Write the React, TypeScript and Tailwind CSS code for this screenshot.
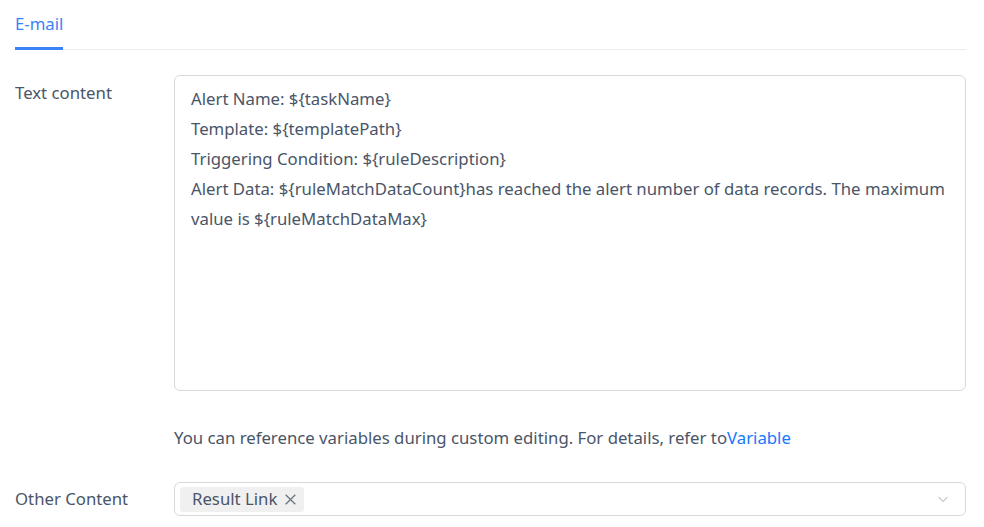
import React from "react";

export default function App() {
  const lines = [
    "Alert Name: ${taskName}",
    "Template: ${templatePath}",
    "Triggering Condition: ${ruleDescription}",
    "Alert Data: ${ruleMatchDataCount}has reached the alert number of data records. The maximum",
    "value is ${ruleMatchDataMax}",
  ];
  return (
    <div
      className="w-[984px] h-[527px] bg-white text-[16.75px] text-[#4a5568] overflow-hidden"
      style={{ fontFamily: '"Noto Sans", "Open Sans", sans-serif' }}
    >
      <div className="pl-[15px] pr-[18px]">
        <div className="flex border-b border-[#ebedf0] h-[50px]">
          <div className="relative flex items-center h-full text-[#3b82f6] pb-[2px]">
            E-mail
            <div className="absolute left-0 right-0 bottom-[-1px] h-[3px] bg-[#3b82f6]" />
          </div>
        </div>

        <div className="flex mt-[25px]">
          <div className="w-[159px] shrink-0 pt-[5px]">Text content</div>
          <div className="flex-1">
            <div className="h-[316px] border border-[#d9d9d9] rounded-[6px] px-[16px] pt-[8px] leading-[30px]">
              {lines.map((l, i) => (
                <div key={i} className="whitespace-nowrap">
                  {l}
                </div>
              ))}
            </div>
            <div className="mt-[35px] leading-[24px]">
              You can reference variables during custom editing. For details, refer to
              <span className="text-[#1677ff]">Variable</span>
            </div>
          </div>
        </div>

        <div className="flex items-center mt-[32px]">
          <div className="w-[159px] shrink-0">Other Content</div>
          <div className="flex-1 h-[34px] border border-[#d9d9d9] rounded-[6px] flex items-center pl-[5px] pr-[16px]">
            <div className="flex items-center h-[25px] bg-[#f0f0f0] rounded-[3px] pl-[12px] pr-[6px] gap-[6px]">
              <span>Result Link</span>
              <svg width="15" height="15" viewBox="0 0 14 14" className="text-[#6b7280]">
                <path d="M2.5 2.5 L11.5 11.5 M11.5 2.5 L2.5 11.5" stroke="currentColor" strokeWidth="1.2" fill="none" />
              </svg>
            </div>
            <div className="flex-1" />
            <svg width="12" height="12" viewBox="0 0 12 12" className="text-[#c4c8cf]">
              <path d="M1.5 4 L6 8.5 L10.5 4" stroke="currentColor" strokeWidth="1.1" fill="none" />
            </svg>
          </div>
        </div>
      </div>
    </div>
  );
}
